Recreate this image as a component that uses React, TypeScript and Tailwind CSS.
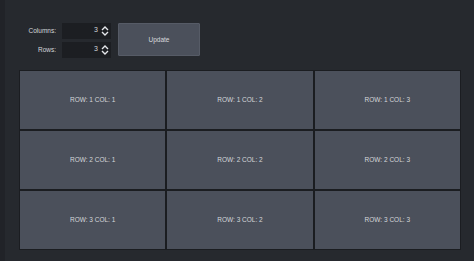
import React from "react";

const rows = [1, 2, 3];
const cols = [1, 2, 3];

function Spinner() {
  return (
    <svg width="8" height="12" viewBox="0 0 8 12" className="ml-[3px]">
      <path d="M1 5 L4 2 L7 5" fill="none" stroke="#e5e7eb" strokeWidth="1.4" />
      <path d="M1 7 L4 10 L7 7" fill="none" stroke="#e5e7eb" strokeWidth="1.4" />
    </svg>
  );
}

function NumberField({ label, value }: { label: string; value: number }) {
  return (
    <div className="flex h-[17px] items-center">
      <span className="w-[52px] pr-[1px] text-right text-[6.5px] text-[#d4d6da]">{label}</span>
      <div className="ml-[5px] flex h-[16px] w-[49px] items-center justify-end bg-[#1c1e22] pr-[2px] text-[7px] text-[#d4d6da]">
        <span>{value}</span>
        <Spinner />
      </div>
    </div>
  );
}

export default function App() {
  return (
    <div
      className="flex h-[261px] w-[474px] flex-col border-l-[5px] border-[#212328] bg-[#26292e] pt-[22px]"
      style={{ fontFamily: '"Liberation Sans", Arial, sans-serif' }}
    >
      <div className="flex items-start">
        <div className="flex flex-col gap-[2px]">
          <NumberField label="Columns:" value={3} />
          <NumberField label="Rows:" value={3} />
        </div>
        <button
          type="button"
          className="ml-[7px] mt-[1px] h-[33px] w-[82px] rounded-[1px] border border-[#565b66] bg-[#4b505b] text-[6.5px] text-[#d8dade]"
        >
          Update
        </button>
      </div>
      <div className="ml-[14px] mt-[12px] grid w-[442px] grid-cols-3 grid-rows-3 gap-[2px] bg-[#1b1d21] p-[1px]">
        {rows.map((r) =>
          cols.map((c) => (
            <div
              key={`${r}-${c}`}
              className="flex h-[58px] items-center justify-center bg-[#4b505b] text-[6.5px] text-[#d4d6da]"
            >
              ROW: {r} COL: {c}
            </div>
          ))
        )}
      </div>
    </div>
  );
}
